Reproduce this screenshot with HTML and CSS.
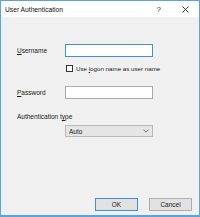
FILE: index.html
```html
<!DOCTYPE html>
<html>
<head>
<meta charset="utf-8">
<link rel="stylesheet" href="styles.css">
</head>
<body>
<div class="window">
  <div class="titlebar">
    <span class="title">User Authentication</span>
    <span class="help">?</span>
    <svg class="close" width="7" height="7" viewBox="0 0 7 7"><path d="M0.5 0.5 L6.5 6.5 M6.5 0.5 L0.5 6.5" stroke="#222" stroke-width="0.9" fill="none"/></svg>
  </div>
  <div class="content">
    <div class="row row-user">
      <label class="label"><u>U</u>sername</label>
      <div class="input focused"></div>
    </div>
    <div class="row row-check">
      <span class="checkbox"></span>
      <span class="check-label">Use <u>l</u>ogon name as user name</span>
    </div>
    <div class="row row-pass">
      <label class="label"><u>P</u>assword</label>
      <div class="input"></div>
    </div>
    <div class="auth-label">Authentication t<u>y</u>pe</div>
    <div class="select">
      <span>Auto</span>
      <svg class="chev" width="6" height="4" viewBox="0 0 6 4"><path d="M0.5 0.8 L3 3.2 L5.5 0.8" stroke="#555" stroke-width="0.8" fill="none"/></svg>
    </div>
    <div class="footer">
      <div class="btn default">OK</div>
      <div class="btn">Cancel</div>
    </div>
  </div>
</div>
</body>
</html>
```
FILE: styles.css
```css
html, body {
  margin: 0;
  padding: 0;
  background: #f0f0f0;
}
body {
  font-family: "Liberation Sans", Arial, sans-serif;
  color: #1a1a1a;
}
u { text-decoration: underline; text-underline-offset: 1px; text-decoration-thickness: 0.5px; }
.window {
  width: 200px;
  height: 217px;
  box-sizing: border-box;
  border: 1px solid #5aa3e0;
  border-bottom-width: 2px;
  background: #f0f0f0;
  display: flex;
  flex-direction: column;
}
.titlebar {
  height: 16px;
  background: #ffffff;
  display: flex;
  align-items: center;
  padding-left: 4px;
  font-size: 6.7px;
  flex-shrink: 0;
}
.title { flex: 1; color: #111; }
.help {
  font-size: 7.5px;
  color: #222;
  margin-right: 21px;
}
.close { margin-right: 10px; }
.content {
  flex: 1;
  display: flex;
  flex-direction: column;
  padding: 27px 7px 4px 16px;
  font-size: 6.5px;
}
.row { display: flex; align-items: center; }
.label { width: 48px; }
.input {
  width: 88px;
  height: 13px;
  box-sizing: border-box;
  background: #fff;
  border: 1px solid #a9a9a9;
}
.input.focused { border-color: #3d8fd9; }
.row-check {
  margin-top: 7px;
  margin-left: 49px;
  height: 8px;
}
.checkbox {
  width: 7px;
  height: 7px;
  box-sizing: border-box;
  border: 1px solid #333;
  background: #fff;
  margin-right: 3px;
}
.check-label { font-size: 6.2px; }
.row-pass { margin-top: 14px; }
.auth-label {
  margin-top: 14px;
  height: 8px;
  line-height: 8px;
}
.select {
  margin-top: 4px;
  margin-left: 48px;
  width: 88px;
  height: 12px;
  box-sizing: border-box;
  background: #e5e5e5;
  border: 1px solid #b9b9b9;
  display: flex;
  align-items: center;
  justify-content: space-between;
  padding: 0 3px 0 3px;
}
.footer {
  margin-top: auto;
  display: flex;
  justify-content: flex-end;
  gap: 11px;
}
.btn {
  width: 43px;
  height: 13px;
  box-sizing: border-box;
  background: #e1e1e1;
  border: 1px solid #adadad;
  display: flex;
  align-items: center;
  justify-content: center;
}
.btn.default { border-color: #3d8fd9; }
```
